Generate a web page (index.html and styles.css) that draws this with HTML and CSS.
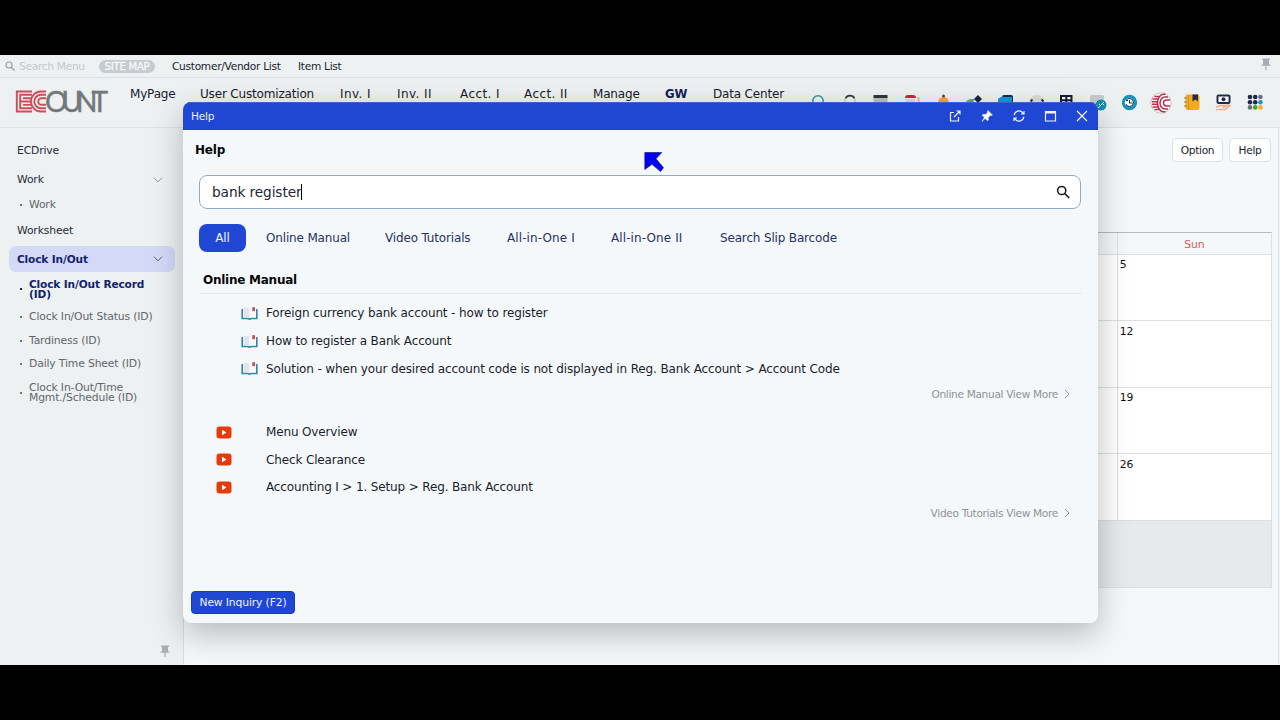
FILE: index.html
```html
<!DOCTYPE html>
<html lang="en">
<head>
<meta charset="utf-8">
<title>ECOUNT</title>
<link rel="stylesheet" href="styles.css">
</head>
<body>
<svg class="defs" width="0" height="0">
  <defs>
    <symbol id="pin" viewBox="0 0 10 12"><path d="M1 .5h8v1.3H8v4.6h1.5v1.3H5.6V12H4.4V7.700H.5V6.400H2V1.800H1z" fill="#a9adb4"/></symbol>
    <symbol id="down" viewBox="0 0 10 6"><path d="M1 .7 5 4.900 9 .7" fill="none" stroke="currentColor"/></symbol>
    <symbol id="next" viewBox="0 0 6 10"><path d="M1 1l4 4-4 4" fill="none" stroke="currentColor"/></symbol>
    <symbol id="book" viewBox="0 0 17 13"><path d="M1.200 2v9.500h5.300l2 .6 2-.6h5.300V2" fill="none" stroke="#3683a8" stroke-width="1.600"/><path d="M2.500.8h4.300l1.700.8V11l-1.700-.7H2.500z" fill="#e2e4ea"/><path d="M14.500.8h-4.300l-1.700.8V11l1.700-.7h4.300z" fill="#f7f9fb"/><path d="M11.300.3h2.700v4.200l-1.350-.8-1.350.8z" fill="#c84a50"/></symbol>
    <symbol id="play" viewBox="0 0 16 13"><rect x=".5" y=".5" width="15" height="12" rx="3" fill="#e33b0b"/><path d="M6 3.700v5.600l4.500-2.800z" fill="#fff"/></symbol>
  </defs>
</svg>
<div class="app">
  <div class="topbar">
    <svg class="mag-small" viewBox="0 0 10 10"><circle cx="4" cy="4" r="3" fill="none" stroke="#9b9fa4" stroke-width="1.100"/><path d="M6.200 6.200 9.500 9.500" stroke="#9b9fa4" stroke-width="1.300"/></svg>
    <span class="menu-search">Search Menu</span>
    <span class="sitemap">SITE MAP</span>
    <span class="shortcut first">Customer/Vendor List</span>
    <span class="shortcut">Item List</span>
    <svg class="pin top-pin"><use href="#pin"/></svg>
  </div>
  <div class="header">
    <svg class="logo" viewBox="0 0 94 24">
      <g fill="none" stroke="#cf4c5a" stroke-width="1.900">
        <path d="M17 1.500H1.800v20H17M17 4.800H5.200v13.400H17M17 8.200H8M17 11.500H5M17 14.900H8"/>
        <path d="M31 1.500H26a10 10 0 0 0 0 20h5M31 4.800H26a6.700 6.700 0 0 0 0 13.400h5M31 8.200H26.500a3.300 3.300 0 0 0 0 6.600H31"/>
      </g>
      <text class="logo-text" x="30" y="22" textLength="63" lengthAdjust="spacing">OUNT</text>
    </svg>
    <nav class="main-nav">
      <span>MyPage</span><span>User Customization</span><span class="num">Inv. I</span><span class="num">Inv. II</span><span class="num">Acct. I</span><span class="num">Acct. II</span><span>Manage</span><span class="current">GW</span><span>Data Center</span>
    </nav>
    <div class="tools">
      <svg viewBox="0 0 18 18"><circle cx="9" cy="8" r="5.200" fill="none" stroke="#2b95b5" stroke-width="1.500"/></svg>
      <svg viewBox="0 0 18 18"><path d="M5.500 6.500a5 5 0 0 1 9 0" transform="translate(0 -1)" fill="none" stroke="#33374e" stroke-width="1.700"/><path d="M5 6v4M15 6v4" stroke="#bbb"/></svg>
      <svg viewBox="0 0 18 18"><rect x="2.500" y="2" width="14" height="13" rx="1" fill="#b9bfc5"/><path d="M2.500 2h14v3h-14z" fill="#30344a"/></svg>
      <svg viewBox="0 0 18 18"><path d="M2 5q0-3 3-3h5q3 0 3 3z" fill="#c8263b"/><path d="M2 6h10v5H2z" fill="#e7d2d3"/><path d="M15.500 4v6" stroke="#ecb58d" stroke-width="2"/></svg>
      <svg viewBox="0 0 18 18"><path d="M4 11q0-7 5.500-7t5.500 7z" fill="#f1aa31"/><circle cx="9.500" cy="3" r="1.500" fill="#55452f"/></svg>
      <svg viewBox="0 0 18 18"><path d="m1 8 4-2h5l-2 3H2z" fill="#65b24b"/><path d="m13 2 4 4-4 4-4-4z" fill="#17274c"/></svg>
      <svg viewBox="0 0 18 18"><rect x="6" y="2" width="11" height="9" rx="2" fill="#122f59"/><path d="M2 12V6q3-3 6-2h8v8z" fill="#0b9bda"/></svg>
      <svg viewBox="0 0 18 18"><path d="M3 10V6l4-4h6l4 4v4z" fill="#dadcdf"/><path d="m3.500 8.500 2-2M14.500 6.500l2 2" stroke="#30343c" stroke-width="2"/></svg>
      <svg viewBox="0 0 18 18"><path d="M2 3h10.500v10H2zM7.300 3v10M2 7.300h10.500" fill="#fff" stroke="#151a40" stroke-width="2"/></svg>
      <svg viewBox="0 0 18 18"><rect x="0" y="2" width="14" height="9" rx="1.500" fill="#c6cbd0"/><circle cx="11" cy="12" r="5.500" fill="#178faf"/><path d="m8 15 6-6M9 11l2 2m1-3 2 2" stroke="#d8f7ff"/></svg>
      <svg viewBox="0 0 18 18"><circle cx="8.500" cy="9.500" r="6.200" fill="#fff" stroke="#1593b9" stroke-width="3"/><path d="M5 7.500a4 4 0 1 1 0 4M5 7.500h2M8.500 7v3h3" fill="none" stroke="#154564" stroke-width="1.100"/></svg>
      <svg class="ec-badge" viewBox="0 0 22 22"><circle cx="11" cy="11" r="10.200" fill="#fff" stroke="#c6bfc2"/><g fill="none" stroke="#b8304b" stroke-width="1.500"><path d="M4.500 4.500H9M2.500 7h6M2 9.700h6M2 12.300h6M2.500 15h6M4.500 17.500H9"/><path d="M15.500 2.200h-2a6 8.800 0 0 0 0 17.600h2M18 5h-3a5 6 0 0 0 0 12h3M20 8h-3.500a3 3 0 0 0 0 6H20"/></g></svg>
      <svg viewBox="0 0 18 18"><rect x="2.500" y="1.500" width="14" height="15.500" rx="2" fill="#f3aa25"/><path d="M9.500 1.500H15v7L12.250 6.500 9.500 8.500z" fill="#252c4a"/><path d="M5.500 2v15" stroke="#d98c1b"/><path d="M1.300 5h2M1.300 9h2M1.300 13h2" stroke="#664b29"/></svg>
      <svg viewBox="0 0 18 18"><rect x="3.500" y="2.500" width="12" height="7.500" rx="1" fill="#fff" stroke="#20294c" stroke-width="2"/><circle cx="9.500" cy="6.200" r="2" fill="#20294c"/><path d="m2 14 4-1.500h5l-2 2 5-2.500 2 .5-5 4H2" fill="none" stroke="#efaf8a" stroke-width="1.500"/></svg>
      <svg viewBox="0 0 18 18"><g fill="#20284a"><circle cx="4" cy="4" r="2.300"/><circle cx="9.200" cy="4" r="2.300"/><circle cx="4" cy="9.200" r="2.300"/><circle cx="9.200" cy="9.200" r="2.300"/></g><circle cx="14.400" cy="4" r="2.300" fill="#687080"/><circle cx="14.400" cy="9.200" r="2.300" fill="#159bd0"/><circle cx="4" cy="14.400" r="2.300" fill="#687080"/><circle cx="9.200" cy="14.400" r="2.300" fill="#41a621"/><circle cx="14.400" cy="14.400" r="2.300" fill="#f1ad27"/></svg>
    </div>
  </div>
  <div class="workspace">
    <aside class="sidebar">
      <div class="side-item drive">ECDrive</div>
      <div class="side-item work"><span>Work</span><svg class="down"><use href="#down"/></svg></div>
      <div class="sub"><i></i><span>Work</span></div>
      <div class="side-item worksheet">Worksheet</div>
      <div class="side-item active"><span>Clock In/Out</span><svg class="down"><use href="#down"/></svg></div>
      <div class="sub two selected"><i></i><span>Clock In/Out Record<br>(ID)</span></div>
      <div class="sub status"><i></i><span>Clock In/Out Status (ID)</span></div>
      <div class="sub"><i></i><span>Tardiness (ID)</span></div>
      <div class="sub"><i></i><span>Daily Time Sheet (ID)</span></div>
      <div class="sub two last"><i></i><span>Clock In-Out/Time<br>Mgmt./Schedule (ID)</span></div>
      <svg class="pin side-pin"><use href="#pin"/></svg>
    </aside>
    <main class="content">
      <div class="actions"><span class="btn option">Option</span><span class="btn help">Help</span></div>
      <div class="calendar">
        <b></b><b></b><b></b><b></b><b></b><b></b><b class="sun">Sun</b>
        <div></div><div></div><div></div><div></div><div></div><div></div><div>5</div>
        <div></div><div></div><div></div><div></div><div></div><div></div><div>12</div>
        <div></div><div></div><div></div><div></div><div></div><div></div><div>19</div>
        <div></div><div></div><div></div><div></div><div></div><div></div><div>26</div>
        <p></p>
      </div>
    </main>
  </div>
  <section class="modal">
    <div class="titlebar">
      <span>Help</span>
      <div class="window-icons">
        <svg viewBox="0 0 14 14"><path d="M6 3.500H2.500v8.500h8V8M8.500 2H12v3.500M12 2 6 8" /></svg>
        <svg viewBox="0 0 14 14"><path d="m8 1.500 4.500 4.500-1 .6-1.200-.2-2 2 .1 2.600-1 .7-2.200-2.300L2 12.500 4.300 8.500 2.200 6.300l.8-1 2.600.1 2-2-.2-1.200z" fill="#fff" stroke-width=".5"/></svg>
        <svg viewBox="0 0 14 14"><path d="M2.200 6.200a4.800 4.800 0 0 1 8.600-2.400L12 5M12 2v3H9M11.800 7.800a4.800 4.800 0 0 1-8.600 2.400L2 9M2 12V9h3"/></svg>
        <svg viewBox="0 0 14 14"><path d="M2.500 2.500h10v9.500h-10z"/><path d="M2.500 3.300h10" stroke-width="2.500"/></svg>
        <svg viewBox="0 0 14 14"><path d="m2 2 10 10M12 2 2 12"/></svg>
      </div>
    </div>
    <h1>Help</h1>
    <div class="search"><span>bank register</span><i class="caret"></i><svg viewBox="0 0 14 14"><circle cx="5.700" cy="5.500" r="4.100" fill="none" stroke="#151523" stroke-width="1.500"/><path d="m8.700 8.500 4.500 4.500" stroke="#151523" stroke-width="1.700"/></svg></div>
    <div class="tabs"><span class="tab-on">All</span><span>Online Manual</span><span>Video Tutorials</span><span class="num">All-in-One I</span><span class="num">All-in-One II</span><span>Search Slip Barcode</span></div>
    <h2>Online Manual</h2>
    <div class="results manual">
      <div><svg><use href="#book"/></svg><span>Foreign currency bank account - how to register</span></div>
      <div><svg><use href="#book"/></svg><span>How to register a Bank Account</span></div>
      <div><svg><use href="#book"/></svg><span>Solution - when your desired account code is not displayed in Reg. Bank Account &gt; Account Code</span></div>
    </div>
    <div class="more"><span>Online Manual View More</span><svg><use href="#next"/></svg></div>
    <div class="results video">
      <div><svg><use href="#play"/></svg><span>Menu Overview</span></div>
      <div><svg><use href="#play"/></svg><span>Check Clearance</span></div>
      <div><svg><use href="#play"/></svg><span>Accounting I &gt; 1. Setup &gt; Reg. Bank Account</span></div>
    </div>
    <div class="more"><span>Video Tutorials View More</span><svg><use href="#next"/></svg></div>
    <div class="footer"><span class="inquiry">New Inquiry (F2)</span></div>
  </section>
  <svg class="cursor" viewBox="0 0 20 20"><path d="M.8.5H17.800L12 6.800 19.500 15.800 16.500 19.500 8 12.300.8 17.500z" fill="#0000f5" stroke="#0a0a70" stroke-width=".6"/></svg>
</div>
</body>
</html>
```
FILE: styles.css
```css
* { box-sizing: border-box; }
body { margin: 0; width: 1280px; height: 720px; padding: 55px 0; background: #000; overflow: hidden; font: 10.800px/14px Verdana, "DejaVu Sans", sans-serif; letter-spacing: -.15px; color: #20232d; }
.defs { position: absolute; }
svg { display: block; flex: none; }
.app { position: relative; height: 610px; overflow: hidden; background: #eef1f2; white-space: nowrap; }
.topbar { height: 23px; display: flex; align-items: center; padding: 0 9px 0 5px; border-bottom: 1px solid #dde1e3; font-size: 10.600px; letter-spacing: -.28px; }
.mag-small { width: 10px; height: 10px; }
.menu-search { width: 80px; margin-left: 4px; color: #c4c8cc; }
.sitemap { width: 56px; height: 13px; border-radius: 7px; background: #c6cbd0; color: #f6f8fa; font-size: 10px; line-height: 13px; text-align: center; letter-spacing: -.2px; -webkit-text-stroke: .3px #f6f8fa; }
.shortcut.first { width: 126px; margin-left: 17px; }
.pin { width: 10px; height: 12px; }
.top-pin { margin: -4px 0 0 auto; }
.header { height: 50px; display: flex; border-bottom: 1px solid #dde1e3; }
.logo { width: 94px; height: 24px; margin: 12px 0 0 15px; overflow: visible; }
.logo-text { font: 28px Lato, sans-serif; fill: #74787a; stroke: #74787a; stroke-width: .4px; letter-spacing: 0; }
.main-nav { display: grid; grid-template-columns: 70px 140px 57px 63px 64px 69px 72px 48px 90px; margin: 8px 0 0 21px; height: 16px; font-size: 12px; letter-spacing: -.17px; line-height: 16px; color: #171a30; }
.main-nav .num { letter-spacing: .4px; }
.tabs .num { letter-spacing: .1px; }
.current { font-weight: bold; color: #102060; font-size: 11.700px; }
.tools { display: flex; gap: 13.200px; margin: 15px 0 0 6px; }
.tools svg { width: 18px; height: 18px; }
.tools .ec-badge { width: 22px; height: 22px; margin: -1px -2px 0; }
.workspace { height: 537px; display: flex; }
.sidebar { width: 184px; border-right: 1px solid #d9dde0; padding: 13px 8px 8px; display: flex; flex-direction: column; }
.side-item { display: flex; justify-content: space-between; align-items: center; height: 19px; padding: 1px 12px 0 9px; color: #292c38; }
.down { width: 10px; height: 6px; color: #92979d; }
.work { margin-top: 10px; }
.worksheet { margin: 5px 0 6px; }
.side-item.active { height: 26px; margin-left: 1px; width: 166px; padding: 0 12px 0 8px; border-radius: 7px; background: #d4d9f8; color: #13246c; font-weight: bold; font-size: 10.600px; }
.active .down { color: #54608e; }
.sub { height: 23.400px; display: flex; align-items: center; gap: 7px; padding: 1px 0 0 12px; color: #62666c; line-height: 10px; }
.work + .sub { height: 24px; margin-top: 3px; }
.sub i { width: 2px; height: 2px; background: #777; }
.two { height: 28px; }
.selected { color: #13246c; font-weight: bold; margin-top: 2px; font-size: 10.600px; }
.selected i { background: #13246c; }
.status { margin-top: 3.300px; }
.last { margin-top: 3px; }
.side-pin { margin: auto 5px 0 auto; }
.content { width: 1095px; flex: none; background: #f5f8fa; border-right: 1px solid #dfe4e6; padding: 10px 6px 0; }
.actions { display: flex; justify-content: flex-end; gap: 6px; }
.btn { height: 24px; line-height: 23px; border: 1px solid #dce1e5; border-radius: 4px; background: #fff; text-align: center; font-size: 10.600px; letter-spacing: -.3px; }
.option { width: 51px; }
.help { width: 42px; margin-right: 1px; }
.calendar { display: grid; grid-template-columns: repeat(7, 1fr); grid-template-rows: 21.500px repeat(4, 66.600px) 66.100px; margin-top: 70px; border: 1px solid #dce0e2; border-top-color: #b7bbbd; background: #fff; }
.calendar b, .calendar div { border-left: 1px solid #dce0e2; border-bottom: 1px solid #dce0e2; }
.calendar b { background: #f5f8f9; font-weight: normal; text-align: center; line-height: 23px; }
.calendar .sun { color: #d65b61; }
.calendar div { padding: 3.500px 2px; color: #111; }
.calendar p { margin: 0; grid-column: 1 / -1; background: #e6eaec; }
.modal { position: absolute; left: 183px; top: 47px; width: 915px; height: 521px; display: flex; flex-direction: column; border-radius: 8px; background: #f5f8fa; box-shadow: 0 11px 32px rgba(0,0,0,.26); overflow: hidden; }
.titlebar { height: 28px; flex: none; display: flex; align-items: center; justify-content: space-between; padding: 0 9px 0 8px; background: #2047d4; border-top: 1px solid #3c64cf; border-bottom: 1px solid #234b9e; color: #eef3ff; font-size: 10.600px; letter-spacing: -.2px; }
.window-icons { display: flex; gap: 17.700px; }
.window-icons svg { width: 14px; height: 14px; fill: none; stroke: #eef3ff; stroke-width: 1.200; }
h1 { margin: 12px 0 0 12px; height: 16px; font-size: 12px; line-height: 16px; letter-spacing: -.2px; color: #080808; }
.search { width: 882px; height: 34px; flex: none; margin: 17px 0 0 16px; display: flex; align-items: center; padding: 0 10px 0 12px; background: #fff; border: 1px solid #8caec5; border-radius: 8px; font-size: 13.700px; letter-spacing: -.1px; color: #232633; }
.search svg { width: 14px; height: 14px; margin-left: auto; }
.caret { width: 1px; height: 16px; margin-left: -1px; background: #000; }
.tabs { display: grid; grid-template-columns: 67px 119px 122px 104px 109px 120px; height: 28px; flex: none; margin: 15px 0 0 16px; line-height: 28px; font-size: 12px; letter-spacing: -.16px; color: #28325e; }
.tab-on { width: 47px; border-radius: 8px; background: #2047d4; color: #edf3ff; text-align: center; }
h2 { width: 883px; height: 25px; flex: none; margin: 17px 0 0 16px; padding-left: 4px; border-bottom: 1px solid #e6eaec; font-size: 12px; letter-spacing: -.25px; line-height: 22px; color: #080808; }
.results { flex: none; font-size: 12px; letter-spacing: -.14px; color: #1b1d2d; }
.results div { height: 27.600px; display: flex; align-items: center; }
.manual { padding: 5.700px 0 0 58px; }
.manual svg { width: 17px; height: 13px; margin-right: 8px; }
.video { padding: 13px 0 0 33px; }
.video svg { width: 16px; height: 13px; margin-right: 34px; }
.more { height: 23px; flex: none; display: flex; align-items: center; justify-content: flex-end; gap: 6px; padding: 0 28px 0 0; color: #909397; font-size: 10.600px; letter-spacing: -.33px; }
.more svg { width: 6px; height: 10px; }
.footer { margin: auto 0 9px 8px; display: flex; }
.inquiry { width: 104px; height: 23px; border: 1px solid #193db0; border-radius: 4px; background: #2047d4; color: #edf3ff; text-align: center; line-height: 22px; }
.cursor { position: absolute; left: 644px; top: 97px; width: 20px; height: 20px; }
```
